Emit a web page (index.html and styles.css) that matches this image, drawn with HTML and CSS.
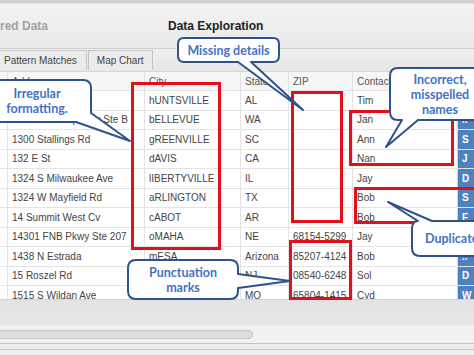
FILE: index.html
```html
<!DOCTYPE html>
<html lang="en">
<head>
    <meta charset="UTF-8">
    <title>Data Exploration</title>
    <link rel="stylesheet" href="styles.css">
</head>
<body>
    <div class="window">
        <div class="topbar"></div>
        <div class="titlebar">
            <div class="crumb"><span>Filtered Data</span></div>
            <h1>Data Exploration</h1>
        </div>
        <div class="tabs">
            <div class="tab first">Pattern Matches</div>
            <div class="tab">Map Chart</div>
        </div>

        <!-- Tabla de datos -->
        <div class="grid">
            <div class="row head"><span></span><span>Address</span><span>City</span><span>State</span><span>ZIP</span><span>Contact</span><span class="tag"></span></div>
            <div class="row"><span></span><span>1200 Main St</span><span>hUNTSVILLE</span><span>AL</span><span></span><span>Tim</span><span class="tag">..</span></div>
            <div class="row"><span></span><span>12020 Northup Way Ste B</span><span>bELLEVUE</span><span>WA</span><span></span><span>Jan</span><span class="tag">..</span></div>
            <div class="row"><span></span><span>1300 Stallings Rd</span><span>gREENVILLE</span><span>SC</span><span></span><span>Ann</span><span class="tag">S</span></div>
            <div class="row"><span></span><span>132 E St</span><span>dAVIS</span><span>CA</span><span></span><span>Nan</span><span class="tag">J</span></div>
            <div class="row"><span></span><span>1324 S Milwaukee Ave</span><span>lIBERTYVILLE</span><span>IL</span><span></span><span>Jay</span><span class="tag">D</span></div>
            <div class="row"><span></span><span>1324 W Mayfield Rd</span><span>aRLINGTON</span><span>TX</span><span></span><span>Bob</span><span class="tag">S</span></div>
            <div class="row"><span></span><span>14 Summit West Cv</span><span>cABOT</span><span>AR</span><span></span><span>Bob</span><span class="tag">F</span></div>
            <div class="row"><span></span><span>14301 FNB Pkwy Ste 207</span><span>oMAHA</span><span>NE</span><span>68154-5299</span><span>Jay</span><span class="tag">O</span></div>
            <div class="row"><span></span><span>1438 N Estrada</span><span>mESA</span><span>Arizona</span><span>85207-4124</span><span>Bob</span><span class="tag">..</span></div>
            <div class="row"><span></span><span>15 Roszel Rd</span><span>pRINCETON</span><span>NJ</span><span>08540-6248</span><span>Sol</span><span class="tag">D</span></div>
            <div class="row"><span></span><span>1515 S Wildan Ave</span><span>sPRINGFIELD</span><span>MO</span><span>65804-1415</span><span>Cyd</span><span class="tag">W</span></div>
        </div>

        <div class="footer">
            <div class="band"></div>
            <div class="scroll"><div class="thumb"></div></div>
            <div class="rule"></div>
        </div>

        <!-- Anotaciones -->
        <svg class="marks" width="474" height="355" viewBox="0 0 474 355">
            <g class="boxes">
                <rect x="132.5" y="83.5" width="87" height="165"/>
                <rect x="292.5" y="92.5" width="49" height="129"/>
                <rect x="350.5" y="111.5" width="102" height="53"/>
                <rect x="355.5" y="188.5" width="130" height="34"/>
                <rect x="290.5" y="241.5" width="60" height="57"/>
            </g>
            <g class="callouts">
                <path d="M184,38 H273 Q279,38 279,44 V56 Q279,62 273,62 H251 L303,110 L238,62 H184 Q178,62 178,56 V44 Q178,38 184,38 Z"/>
                <path d="M-10,80 H83 Q91,80 91,88 V113 L130,141 L76,122 H-10 Z"/>
                <path d="M398,68 H484 V120 H418 L386,147 L402,120 H398 Q390,120 390,112 V76 Q390,68 398,68 Z"/>
                <path d="M432,221 H484 V256 H420 Q412,256 412,248 V229 Q412,221 418,221 L388,202 Z"/>
                <path d="M136,260 H230 Q238,260 238,268 V274 L290,281 L238,288 V291 Q238,299 230,299 H136 Q128,299 128,291 V268 Q128,260 136,260 Z"/>
            </g>
        </svg>
        <div class="note missing">Missing details</div>
        <div class="note irregular">Irregular<br>formatting.</div>
        <div class="note incorrect">Incorrect,<br>misspelled<br>names</div>
        <div class="note duplicate">Duplicate</div>
        <div class="note punctuation">Punctuation<br>marks</div>
    </div>
</body>
</html>
```

FILE: styles.css
```css
/* Base */
body {
    margin: 0;
    font-family: 'Liberation Sans', Arial, sans-serif;
    background: #f0f0f0;
    color: #333;
}

.window {
    position: relative;
    width: 474px;
    height: 355px;
    overflow: hidden;
    background: #eeeeee;
}

.topbar {
    height: 3px;
    background: #d2d2d2;
    border-bottom: 1px solid #e2e2e2;
}

.titlebar {
    display: flex;
    align-items: center;
    height: 44px;
    background: linear-gradient(#f3f3f3, #e9e9e9);
}

.crumb {
    display: flex;
    justify-content: flex-end;
    width: 48px;
    overflow: hidden;
    font-size: 12px;
    font-weight: bold;
    color: #a3a3a3;
    white-space: nowrap;
}

.titlebar h1 {
    margin: 0 0 0 120px;
    font-size: 12px;
    font-weight: bold;
    color: #222;
}

/* Pestañas */
.tabs {
    display: flex;
    height: 21px;
    padding-top: 1px;
    border-top: 1px solid #d0d0d0;
    background: linear-gradient(#f0f0f0, #e6e6e6);
}

.tab {
    height: 20px;
    box-sizing: border-box;
    padding: 0 8px;
    line-height: 19px;
    font-size: 10px;
    color: #444;
    background: #ebebeb;
    border: 1px solid #c4c4c4;
    border-bottom: none;
    margin-right: 1px;
    white-space: nowrap;
}

.tab.first {
    margin-left: -6px;
    padding: 0 9px 0 9px;
}

/* Tabla */
.grid {
    height: 228px;
    overflow: hidden;
    background: #fff;
    border-top: 1px solid #d6d6d6;
    box-sizing: border-box;
}

.row {
    display: grid;
    grid-template-columns: 7px 137px 96px 48px 64px 105px 30px;
    height: 19.5px;
    box-sizing: border-box;
    border-bottom: 1px solid #e3e3e3;
    font-size: 10px;
    color: #444;
}

.row span {
    display: flex;
    align-items: center;
    padding-left: 4px;
    border-left: 1px solid #e3e3e3;
    white-space: nowrap;
    overflow: hidden;
}

.row span:first-child {
    border-left: none;
    padding: 0;
}

.row.head {
    height: 19px;
    background: #f6f6f6;
    color: #555;
}

.row .tag {
    padding-left: 4px;
    background: #4f81bd;
    border-left: 1px solid #c7d5e8;
    color: #fff;
    font-weight: bold;
}

/* Pie */
.footer {
    height: 57px;
}

.band {
    height: 25px;
    background: linear-gradient(#e3e3e3, #e8e8e8);
    border-top: 1px solid #d4d4d4;
}

.scroll {
    height: 18px;
    background: #f1f1f1;
    display: flex;
    align-items: center;
}

.thumb {
    width: 255px;
    height: 7px;
    margin-left: -4px;
    border-radius: 4px;
    background: #dedede;
    border: 1px solid #c9c9c9;
}

.rule {
    height: 5px;
    border-top: 1px solid #c4c4c4;
    border-bottom: 1px solid #c8c8c8;
    background: #ececec;
}

/* Anotaciones */
.marks {
    position: absolute;
    top: 0;
    left: 0;
}

.boxes rect {
    fill: none;
    stroke: #e3101b;
    stroke-width: 3;
}

.callouts path {
    fill: #fff;
    stroke: #2f528f;
    stroke-width: 2;
    stroke-linejoin: round;
}

.note {
    position: absolute;
    display: flex;
    align-items: center;
    justify-content: center;
    text-align: center;
    font-family: Lato, 'Open Sans', sans-serif;
    font-weight: bold;
    font-size: 12.5px;
    line-height: 15px;
    color: #4472c4;
}

.missing {
    left: 178px;
    top: 38px;
    width: 101px;
    height: 24px;
}

.irregular {
    left: -16px;
    top: 80px;
    width: 106px;
    height: 42px;
}

.incorrect {
    left: 390px;
    top: 68px;
    width: 100px;
    height: 52px;
}

.duplicate {
    left: 425px;
    top: 221px;
    height: 35px;
    justify-content: flex-start;
}

.punctuation {
    left: 128px;
    top: 260px;
    width: 110px;
    height: 39px;
}
```
